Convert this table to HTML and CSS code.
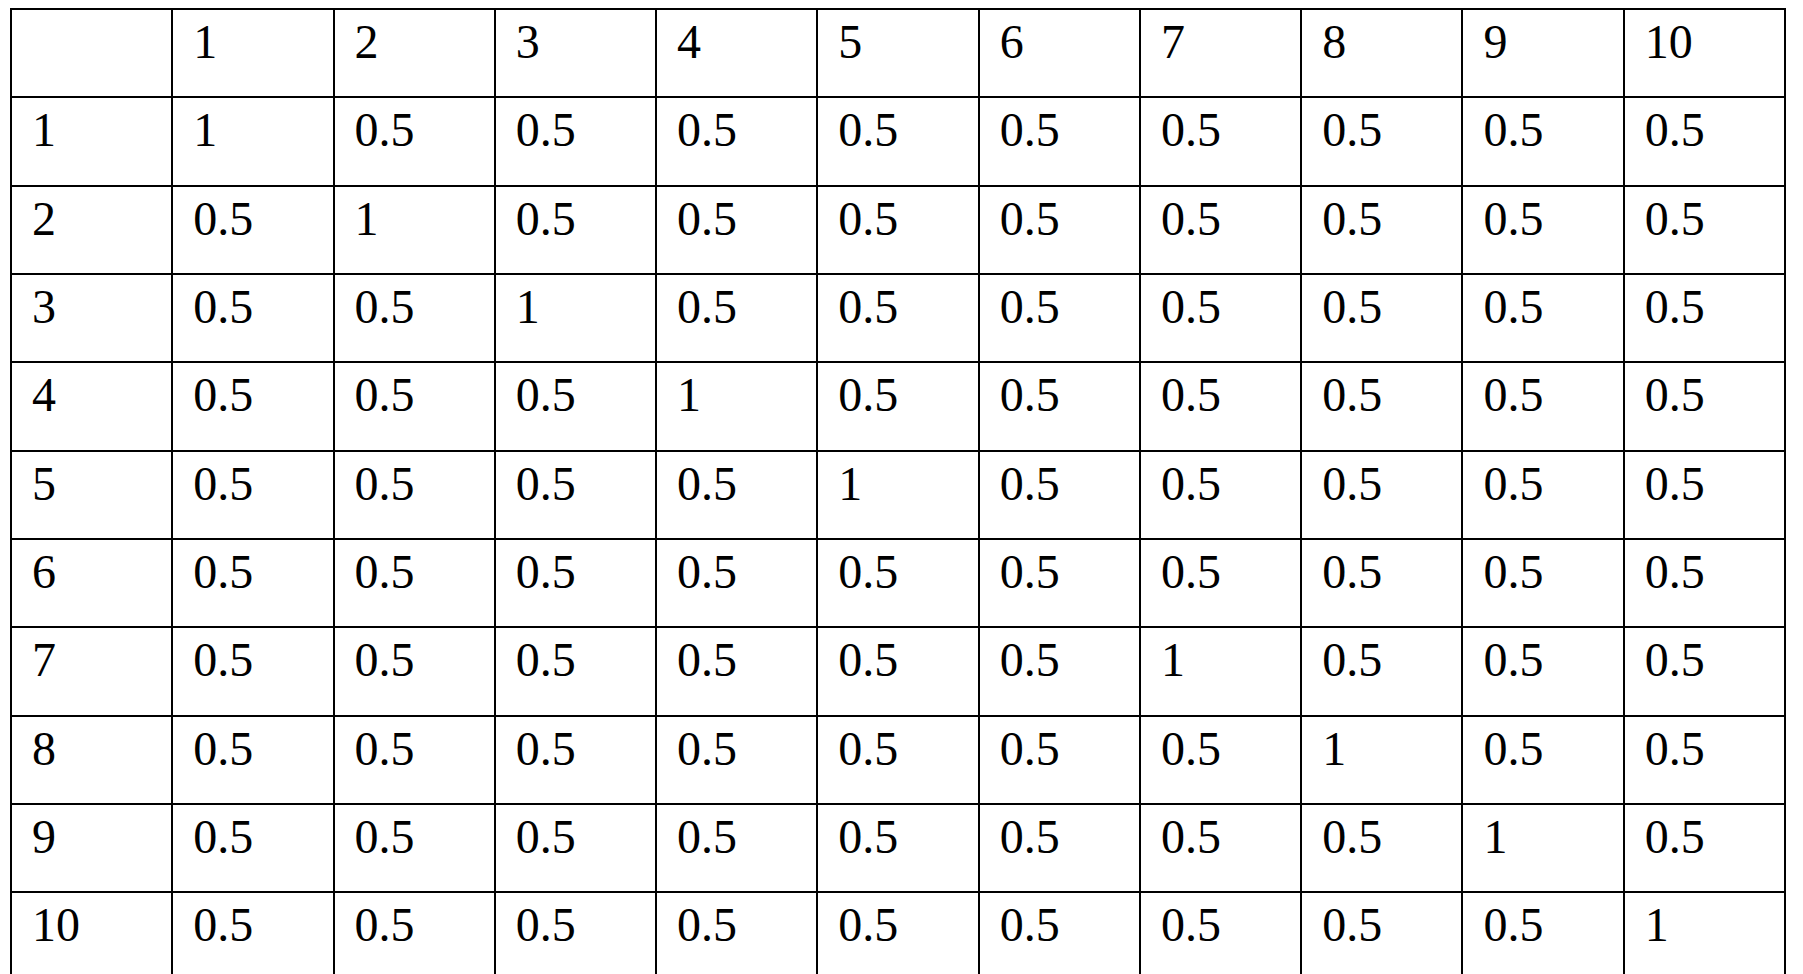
FILE: index.html
```html
<!DOCTYPE html>
<html lang="en">
<head>
<meta charset="utf-8">
<title>Matrix</title>
<link rel="stylesheet" href="styles.css">
</head>
<body>
<div class="matrix">
<div class="cell"></div><div class="cell">1</div><div class="cell">2</div><div class="cell">3</div><div class="cell">4</div><div class="cell">5</div><div class="cell">6</div><div class="cell">7</div><div class="cell">8</div><div class="cell">9</div><div class="cell">10</div>
<div class="cell">1</div><div class="cell">1</div><div class="cell">0.5</div><div class="cell">0.5</div><div class="cell">0.5</div><div class="cell">0.5</div><div class="cell">0.5</div><div class="cell">0.5</div><div class="cell">0.5</div><div class="cell">0.5</div><div class="cell">0.5</div>
<div class="cell">2</div><div class="cell">0.5</div><div class="cell">1</div><div class="cell">0.5</div><div class="cell">0.5</div><div class="cell">0.5</div><div class="cell">0.5</div><div class="cell">0.5</div><div class="cell">0.5</div><div class="cell">0.5</div><div class="cell">0.5</div>
<div class="cell">3</div><div class="cell">0.5</div><div class="cell">0.5</div><div class="cell">1</div><div class="cell">0.5</div><div class="cell">0.5</div><div class="cell">0.5</div><div class="cell">0.5</div><div class="cell">0.5</div><div class="cell">0.5</div><div class="cell">0.5</div>
<div class="cell">4</div><div class="cell">0.5</div><div class="cell">0.5</div><div class="cell">0.5</div><div class="cell">1</div><div class="cell">0.5</div><div class="cell">0.5</div><div class="cell">0.5</div><div class="cell">0.5</div><div class="cell">0.5</div><div class="cell">0.5</div>
<div class="cell">5</div><div class="cell">0.5</div><div class="cell">0.5</div><div class="cell">0.5</div><div class="cell">0.5</div><div class="cell">1</div><div class="cell">0.5</div><div class="cell">0.5</div><div class="cell">0.5</div><div class="cell">0.5</div><div class="cell">0.5</div>
<div class="cell">6</div><div class="cell">0.5</div><div class="cell">0.5</div><div class="cell">0.5</div><div class="cell">0.5</div><div class="cell">0.5</div><div class="cell">0.5</div><div class="cell">0.5</div><div class="cell">0.5</div><div class="cell">0.5</div><div class="cell">0.5</div>
<div class="cell">7</div><div class="cell">0.5</div><div class="cell">0.5</div><div class="cell">0.5</div><div class="cell">0.5</div><div class="cell">0.5</div><div class="cell">0.5</div><div class="cell">1</div><div class="cell">0.5</div><div class="cell">0.5</div><div class="cell">0.5</div>
<div class="cell">8</div><div class="cell">0.5</div><div class="cell">0.5</div><div class="cell">0.5</div><div class="cell">0.5</div><div class="cell">0.5</div><div class="cell">0.5</div><div class="cell">0.5</div><div class="cell">1</div><div class="cell">0.5</div><div class="cell">0.5</div>
<div class="cell">9</div><div class="cell">0.5</div><div class="cell">0.5</div><div class="cell">0.5</div><div class="cell">0.5</div><div class="cell">0.5</div><div class="cell">0.5</div><div class="cell">0.5</div><div class="cell">0.5</div><div class="cell">1</div><div class="cell">0.5</div>
<div class="cell">10</div><div class="cell">0.5</div><div class="cell">0.5</div><div class="cell">0.5</div><div class="cell">0.5</div><div class="cell">0.5</div><div class="cell">0.5</div><div class="cell">0.5</div><div class="cell">0.5</div><div class="cell">0.5</div><div class="cell">1</div>
</div>
</body>
</html>
```

FILE: styles.css
```css
html, body {
  margin: 0;
  padding: 0;
  background: #ffffff;
  overflow: hidden;
}

body {
  padding: 8px 0 0 10px;
  font-family: "Liberation Serif", "Times New Roman", serif;
  color: #000000;
}

.matrix {
  width: 1776px;
  box-sizing: border-box;
  display: grid;
  grid-template-columns: repeat(11, 1fr);
  grid-auto-rows: 88.33px;
  border-left: 2px solid #000;
  border-top: 2px solid #000;
}

.cell {
  border-right: 2px solid #000;
  border-bottom: 2px solid #000;
  padding: 4px 0 0 20px;
  font-size: 48px;
  line-height: normal;
  overflow: hidden;
}
```
